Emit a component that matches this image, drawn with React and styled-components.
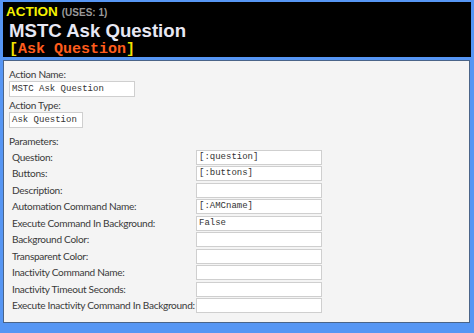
import React from 'react';
import styled, { createGlobalStyle } from 'styled-components';

const GlobalStyle = createGlobalStyle`
  html, body {
    margin: 0;
    padding: 0;
    background: #5696f4;
  }
`;

const Frame = styled.div`
  width: 474px;
  height: 333px;
  box-sizing: border-box;
  padding: 2px 3px 0 3px;
  display: flex;
  flex-direction: column;
  gap: 3px;
`;

const Header = styled.div`
  background: #000;
  height: 55px;
  box-sizing: border-box;
  padding: 3px 4px 0 3px;
  font-family: "Liberation Sans", Arial, sans-serif;
`;

const Kind = styled.div`
  display: flex;
  align-items: baseline;
  gap: 4px;
  line-height: 14px;
`;

const KindName = styled.span`
  color: #f6f200;
  font-weight: bold;
  font-size: 13.5px;
`;

const Uses = styled.span`
  color: #9a9a9a;
  font-weight: bold;
  font-size: 10px;
`;

const Title = styled.div`
  color: #e8e8f4;
  font-weight: bold;
  font-size: 18.6px;
  line-height: 20px;
  padding-left: 3px;
  margin-top: 1px;
`;

const TypeTag = styled.div`
  font-family: "Liberation Mono", "Courier New", monospace;
  font-weight: bold;
  font-size: 15px;
  line-height: 17px;
  padding-left: 3px;
  color: ${p => p.$bracket};
`;

const TypeName = styled.span`
  color: #ff5c1c;
`;

const Panel = styled.div`
  height: 263px;
  margin-right: 1px;
  box-sizing: border-box;
  background: #f4f4f4;
  border: 1px solid #4a6488;
  padding: 6px 5px 0 5px;
  font-family: Lato, "Noto Sans", sans-serif;
  font-size: 10.1px;
  letter-spacing: -0.3px;
  color: #3a3a3a;
`;

const FieldLabel = styled.div`
  line-height: 14px;
  height: 14px;
`;

const TextBox = styled.div`
  box-sizing: border-box;
  width: ${p => p.$width}px;
  height: ${p => p.$height || 16}px;
  background: #fff;
  border: 1px solid #cfcfcf;
  padding: 0 2px;
  font-family: "Liberation Mono", "DejaVu Sans Mono", monospace;
  font-size: 9px;
  letter-spacing: 0;
  line-height: ${p => (p.$height || 16) - 2}px;
  color: #333;
  white-space: nowrap;
  overflow: hidden;
`;

const Field = styled.div`
  margin-bottom: 1px;
`;

const Section = styled.div`
  margin-top: 6px;
  line-height: 14px;
`;

const Params = styled.div`
  display: grid;
  grid-template-columns: 184px 126px;
  grid-auto-rows: 16.5px;
  padding-left: 3px;
  margin-top: 1px;
  align-items: center;
`;

const ParamName = styled.div`
  white-space: nowrap;
  line-height: 15px;
`;

const params = [
  ['Question:', '[:question]'],
  ['Buttons:', '[:buttons]'],
  ['Description:', ''],
  ['Automation Command Name:', '[:AMCname]'],
  ['Execute Command In Background:', 'False'],
  ['Background Color:', ''],
  ['Transparent Color:', ''],
  ['Inactivity Command Name:', ''],
  ['Inactivity Timeout Seconds:', ''],
  ['Execute Inactivity Command In Background:', ''],
];

export default function App() {
  return (
    <>
      <GlobalStyle />
      <Frame>
        <Header>
          <Kind>
            <KindName>ACTION</KindName>
            <Uses>(USES: 1)</Uses>
          </Kind>
          <Title>MSTC Ask Question</Title>
          <TypeTag $bracket="#f2e400">
            [<TypeName>Ask Question</TypeName>]
          </TypeTag>
        </Header>
        <Panel>
          <Field>
            <FieldLabel>Action Name:</FieldLabel>
            <TextBox $width={126}>MSTC Ask Question</TextBox>
          </Field>
          <Field>
            <FieldLabel>Action Type:</FieldLabel>
            <TextBox $width={74}>Ask Question</TextBox>
          </Field>
          <Section>Parameters:</Section>
          <Params>
            {params.map(([name, value]) => (
              <React.Fragment key={name}>
                <ParamName>{name}</ParamName>
                <TextBox $width={126} $height={15}>{value}</TextBox>
              </React.Fragment>
            ))}
          </Params>
        </Panel>
      </Frame>
    </>
  );
}
